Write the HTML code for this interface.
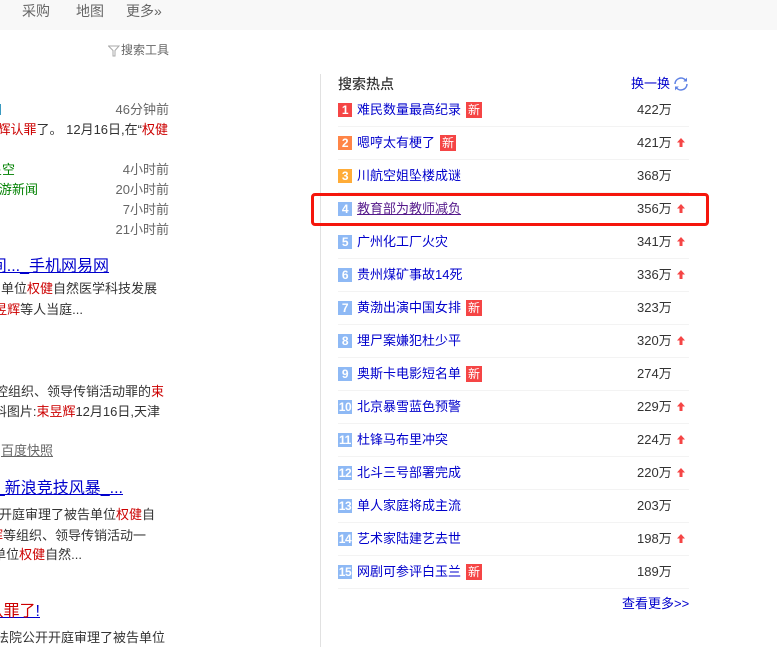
<!DOCTYPE html>
<html lang="zh"><head><meta charset="utf-8"><title>搜索热点</title>
<style>
html,body{margin:0;padding:0;background:#fff}
#p{position:relative;width:777px;height:647px;overflow:hidden;background:#fff;font:13px/20px "Liberation Sans","Noto Sans CJK SC",sans-serif;color:#333}
#p div,#p svg{position:absolute}
.t{white-space:nowrap;margin-top:1px}
.r{white-space:nowrap;text-align:right;left:-200px;margin-top:1px}
.g{color:#666}
.e{color:#c00}
.gn{color:#008000}
a{color:#00c;text-decoration:none}
.u{text-decoration:underline}
#p .l{font-size:16px;line-height:22px;margin-top:2px}
.n{left:338px;width:14px;height:14px;line-height:14px;color:#fff;background:#8eb9f5;text-align:center;font-size:12px;font-weight:bold;letter-spacing:-.4px}
.x{left:357px;white-space:nowrap;margin-top:1px}
.b{width:16px;height:16px;line-height:16px;background:#f54545;color:#fff;font-size:12px;text-align:center}
.c{left:637px;white-space:nowrap;margin-top:1px}
.s{left:338px;width:351px;height:1px;background:#f3f3f3}
.a{left:677px}
</style></head><body><div id="p">
<div style="left:0;top:0;width:777px;height:30px;background:#f8f8f8"></div>
<div class="t g" style="left:22px;top:0;font-size:14px">采购</div>
<div class="t g" style="left:76px;top:0;font-size:14px">地图</div>
<div class="t g" style="left:126px;top:0;font-size:14px">更多»</div>
<svg style="left:108px;top:45px" width="12" height="12" viewBox="0 0 12 12"><path d="M.5 1h10.5L7 5.5V11H5V5.5Z" fill="none" stroke="#aaa"/></svg>
<div class="t g" style="left:121px;top:39px;font-size:12px">搜索工具</div>

<div style="left:0;top:104px;width:1px;height:11px;background:#3a9ac0"></div>
<div class="r g" style="width:369px;top:99px">46分钟前</div>
<div class="r" style="width:368px;top:119px"><span class="e">辉认罪</span>了。 12月16日,在“<span class="e">权健</span></div>
<div class="r gn" style="width:215px;top:159px">星空</div>
<div class="r gn" style="width:238px;top:179px">游新闻</div>
<div class="r g" style="width:369px;top:159px">4小时前</div>
<div class="r g" style="width:369px;top:179px">20小时前</div>
<div class="r g" style="width:369px;top:199px">7小时前</div>
<div class="r g" style="width:369px;top:219px">21小时前</div>

<div class="r l" style="width:309px;top:254px"><a class="u" href="#">间..._手机网易网</a></div>
<div class="r" style="width:357px;top:278px">单位<span class="e">权健</span>自然医学科技发展</div>
<div class="r" style="width:283px;top:299px"><span class="e">昱辉</span>等人当庭...</div>
<div class="r" style="width:364px;top:381px">控组织、领导传销活动罪的<span class="e">束</span></div>
<div class="r" style="width:360px;top:401px">料图片:<span class="e">束昱辉</span>12月16日,天津</div>
<div class="t g u" style="left:1px;top:440px">百度快照</div>

<div class="r l" style="width:323px;top:476px"><a class="u" href="#">_新浪竞技风暴_...</a></div>
<div class="r" style="width:355px;top:504px">开庭审理了被告单位<span class="e">权健</span>自</div>
<div class="r" style="width:346px;top:525px"><span class="e">辉</span>等组织、领导传销活动一</div>
<div class="r" style="width:282px;top:544px">单位<span class="e">权健</span>自然...</div>
<div class="r l" style="width:240px;top:599px"><a class="u" href="#"><span class="e">认罪了</span>!</a></div>
<div class="r" style="width:365px;top:627px">法院公开开庭审理了被告单位</div>

<div style="left:320px;top:74px;width:1px;height:573px;background:#e1e1e1"></div>
<div class="t" style="left:338px;top:73px;font-size:14px;font-weight:500">搜索热点</div>
<div class="t" style="left:631px;top:73px"><a href="#">换一换</a></div>
<svg style="left:673px;top:76px" width="16" height="16" viewBox="0 0 16 16" fill="none" stroke="#5f82e4" stroke-width="1.5"><path d="M2 8A6 6 0 0 1 12.6 4.2"/><path d="M14 8A6 6 0 0 1 3.4 11.8"/><path d="M14 1.6V5.5H10.2Z" fill="#5f82e4" stroke="none"/><path d="M2 14.4V10.5H5.8Z" fill="#5f82e4" stroke="none"/></svg>

<div class="n" style="top:103px;background:#f54545">1</div><div class="x" style="top:99px"><a href="#">难民数量最高纪录</a></div><div class="b" style="left:466px;top:102px">新</div><div class="c" style="top:99px">422万</div><div class="s" style="top:126px"></div>
<div class="n" style="top:136px;background:#ff8547">2</div><div class="x" style="top:132px"><a href="#">嗯哼太有梗了</a></div><div class="b" style="left:440px;top:135px">新</div><div class="c" style="top:132px">421万</div><div class="s" style="top:159px"></div>
<div class="n" style="top:169px;background:#ffac38">3</div><div class="x" style="top:165px"><a href="#">川航空姐坠楼成谜</a></div><div class="c" style="top:165px">368万</div><div class="s" style="top:192px"></div>
<div class="n" style="top:202px">4</div><div class="x" style="top:198px"><a class="u" href="#" style="color:#551a8b">教育部为教师减负</a></div><div class="c" style="top:198px">356万</div><div class="s" style="top:225px"></div>
<div class="n" style="top:235px">5</div><div class="x" style="top:231px"><a href="#">广州化工厂火灾</a></div><div class="c" style="top:231px">341万</div><div class="s" style="top:258px"></div>
<div class="n" style="top:268px">6</div><div class="x" style="top:264px"><a href="#">贵州煤矿事故14死</a></div><div class="c" style="top:264px">336万</div><div class="s" style="top:291px"></div>
<div class="n" style="top:301px">7</div><div class="x" style="top:297px"><a href="#">黄渤出演中国女排</a></div><div class="b" style="left:466px;top:300px">新</div><div class="c" style="top:297px">323万</div><div class="s" style="top:324px"></div>
<div class="n" style="top:334px">8</div><div class="x" style="top:330px"><a href="#">埋尸案嫌犯杜少平</a></div><div class="c" style="top:330px">320万</div><div class="s" style="top:357px"></div>
<div class="n" style="top:367px">9</div><div class="x" style="top:363px"><a href="#">奥斯卡电影短名单</a></div><div class="b" style="left:466px;top:366px">新</div><div class="c" style="top:363px">274万</div><div class="s" style="top:390px"></div>
<div class="n" style="top:400px">10</div><div class="x" style="top:396px"><a href="#">北京暴雪蓝色预警</a></div><div class="c" style="top:396px">229万</div><div class="s" style="top:423px"></div>
<div class="n" style="top:433px">11</div><div class="x" style="top:429px"><a href="#">杜锋马布里冲突</a></div><div class="c" style="top:429px">224万</div><div class="s" style="top:456px"></div>
<div class="n" style="top:466px">12</div><div class="x" style="top:462px"><a href="#">北斗三号部署完成</a></div><div class="c" style="top:462px">220万</div><div class="s" style="top:489px"></div>
<div class="n" style="top:499px">13</div><div class="x" style="top:495px"><a href="#">单人家庭将成主流</a></div><div class="c" style="top:495px">203万</div><div class="s" style="top:522px"></div>
<div class="n" style="top:532px">14</div><div class="x" style="top:528px"><a href="#">艺术家陆建艺去世</a></div><div class="c" style="top:528px">198万</div><div class="s" style="top:555px"></div>
<div class="n" style="top:565px">15</div><div class="x" style="top:561px"><a href="#">网剧可参评白玉兰</a></div><div class="b" style="left:466px;top:564px">新</div><div class="c" style="top:561px">189万</div><div class="s" style="top:588px"></div>

<svg class="a" style="top:138px" width="8" height="9" viewBox="0 0 8 9"><path d="M4 0 8 4.5H5.5V9H2.5V4.5H0Z" fill="#f54545"/></svg>
<svg class="a" style="top:204px" width="8" height="9" viewBox="0 0 8 9"><path d="M4 0 8 4.5H5.5V9H2.5V4.5H0Z" fill="#f54545"/></svg>
<svg class="a" style="top:237px" width="8" height="9" viewBox="0 0 8 9"><path d="M4 0 8 4.5H5.5V9H2.5V4.5H0Z" fill="#f54545"/></svg>
<svg class="a" style="top:270px" width="8" height="9" viewBox="0 0 8 9"><path d="M4 0 8 4.5H5.5V9H2.5V4.5H0Z" fill="#f54545"/></svg>
<svg class="a" style="top:336px" width="8" height="9" viewBox="0 0 8 9"><path d="M4 0 8 4.5H5.5V9H2.5V4.5H0Z" fill="#f54545"/></svg>
<svg class="a" style="top:402px" width="8" height="9" viewBox="0 0 8 9"><path d="M4 0 8 4.5H5.5V9H2.5V4.5H0Z" fill="#f54545"/></svg>
<svg class="a" style="top:435px" width="8" height="9" viewBox="0 0 8 9"><path d="M4 0 8 4.5H5.5V9H2.5V4.5H0Z" fill="#f54545"/></svg>
<svg class="a" style="top:468px" width="8" height="9" viewBox="0 0 8 9"><path d="M4 0 8 4.5H5.5V9H2.5V4.5H0Z" fill="#f54545"/></svg>
<svg class="a" style="top:534px" width="8" height="9" viewBox="0 0 8 9"><path d="M4 0 8 4.5H5.5V9H2.5V4.5H0Z" fill="#f54545"/></svg>

<div class="t" style="left:622px;top:593px"><a href="#">查看更多&gt;&gt;</a></div>
<div style="left:311px;top:193px;width:392px;height:27px;border:3px solid #f5160c;border-radius:4px"></div>
</div></body></html>
